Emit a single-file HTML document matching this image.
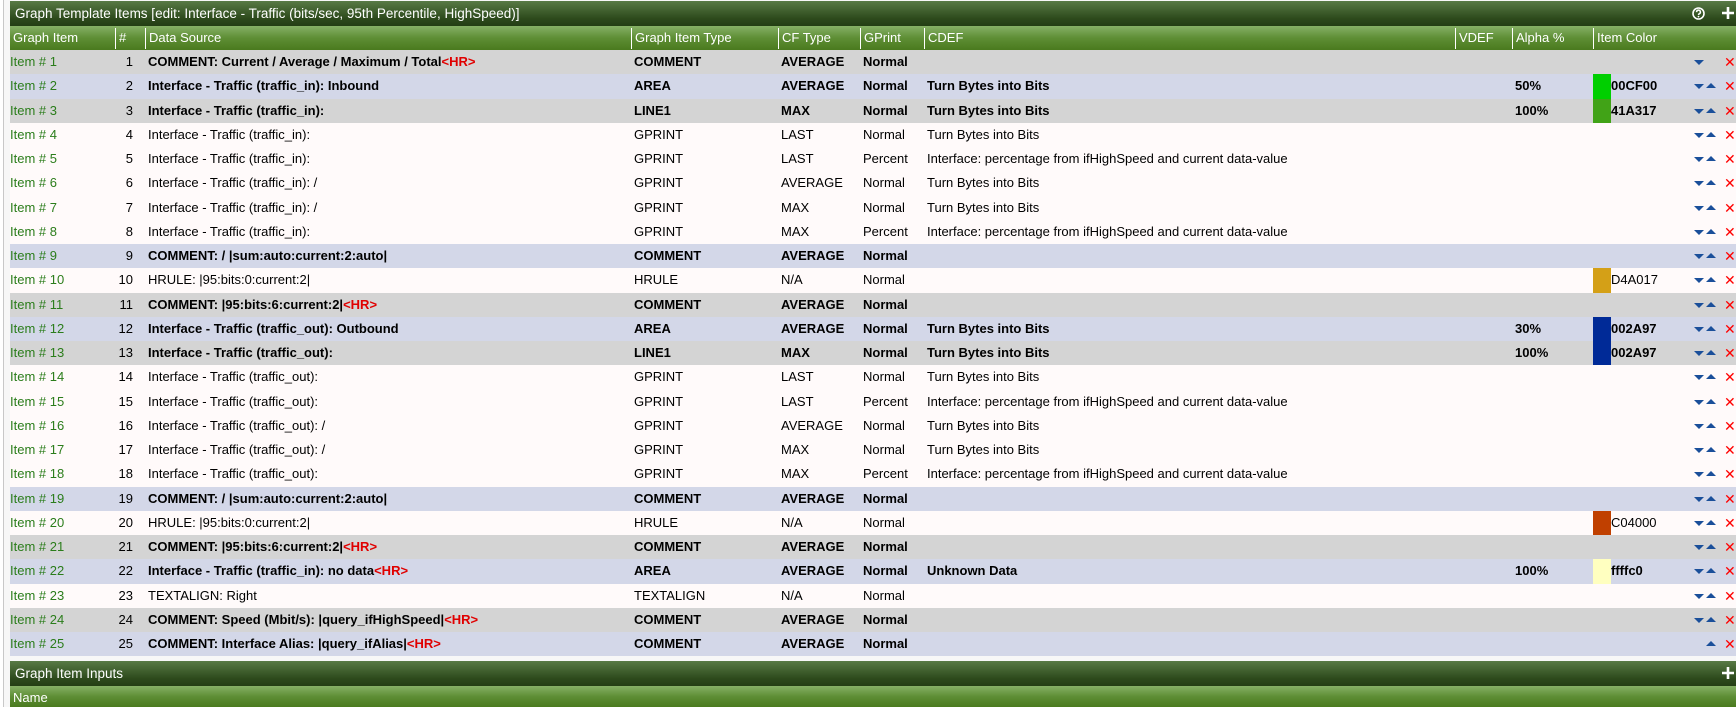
<!DOCTYPE html>
<html><head><meta charset="utf-8"><style>
*{margin:0;padding:0;box-sizing:border-box}
body{width:1736px;height:707px;overflow:hidden;background:#fff;font-family:"Liberation Sans","DejaVu Sans",sans-serif;font-size:13px;color:#000;position:relative}
.frame{position:absolute;left:3px;top:0;width:1733px;height:707px;border-left:1px solid #c8c8c8;background:#f7f7f7}
.title{position:absolute;left:10px;width:1726px;height:25px;background:linear-gradient(#587a45,#2d4a1c 70%,#233d14);color:#fff;font-size:13.5px;line-height:25px;padding-left:5px}
.hdr{position:absolute;left:10px;width:1726px;height:24px;background:linear-gradient(#86b066,#5e8e35 50%,#4a7a1e);color:#fff;line-height:24px}
.hdr span{position:absolute;top:2px;height:21px;line-height:20px;border-left:1px solid #fff;padding-left:3px}
.hdr span.f{border-left:none}
table{position:absolute;left:10px;top:50px;width:1726px;border-collapse:collapse;table-layout:fixed}
td{height:24.24px;padding:0 0 0 3px;white-space:nowrap;overflow:hidden;line-height:24px}
tr.g{background:#d4d4d4;font-weight:bold}
tr.b{background:#d3d7e8;font-weight:bold}
tr.w{background:#fffafa}
td.i{color:#2b7d1b;font-weight:normal;padding-left:0}
td.n{text-align:right;padding-right:12px;font-weight:normal}
.hr{color:#e00000;font-weight:bold}
.sw{display:inline-block;width:18px;height:24.3px;vertical-align:top}
td.c{padding-left:0}
td.a{position:relative}
.dn{position:absolute;left:101px;top:10px;width:0;height:0;border-left:5px solid transparent;border-right:5px solid transparent;border-top:5px solid #1a4f9a}
.up{position:absolute;left:113px;top:9px;width:0;height:0;border-left:5px solid transparent;border-right:5px solid transparent;border-bottom:5px solid #1a4f9a}
.x{position:absolute;left:131px;top:0;color:#f00;font-weight:bold;font-size:14px}
</style></head><body>
<div class="frame"></div>
<div class="title" style="top:1px">Graph Template Items [edit: Interface - Traffic (bits/sec, 95th Percentile, HighSpeed)]
<svg style="position:absolute;left:1682px;top:6px" width="13" height="13" viewBox="0 0 13 13"><circle cx="6.5" cy="6.5" r="5.5" fill="none" stroke="#fff" stroke-width="1.6"/><path d="M4.6 5.1a1.9 1.9 0 1 1 2.6 1.7c-.5.3-.7.6-.7 1.2" fill="none" stroke="#fff" stroke-width="1.5"/><circle cx="6.5" cy="9.6" r=".9" fill="#fff"/></svg>
<svg style="position:absolute;left:1712px;top:6px" width="12" height="12"><path d="M6 0v12M0 6h12" stroke="#fff" stroke-width="2.6"/></svg></div>
<div class="hdr" style="top:26px">
<span class="f" style="left:0">Graph Item</span><span style="left:105px">#</span><span style="left:135px">Data Source</span><span style="left:621px">Graph Item Type</span><span style="left:768px">CF Type</span><span style="left:850px">GPrint</span><span style="left:914px">CDEF</span><span style="left:1445px">VDEF</span><span style="left:1502px">Alpha %</span><span style="left:1583px">Item Color</span></div>
<table>
<colgroup><col style="width:105px"><col style="width:30px"><col style="width:486px"><col style="width:147px"><col style="width:82px"><col style="width:64px"><col style="width:531px"><col style="width:57px"><col style="width:81px"><col style="width:143px"></colgroup>
<tr class="g"><td class="i">Item # 1</td><td class="n">1</td><td>COMMENT: Current / Average / Maximum / Total<span class="hr">&lt;HR&gt;</span></td><td>COMMENT</td><td>AVERAGE</td><td>Normal</td><td></td><td></td><td></td><td class="c a"><i class="dn"></i><b class="x">✕</b></td></tr>
<tr class="b"><td class="i">Item # 2</td><td class="n">2</td><td>Interface - Traffic (traffic_in): Inbound</td><td>AREA</td><td>AVERAGE</td><td>Normal</td><td>Turn Bytes into Bits</td><td></td><td>50%</td><td class="c a"><span class="sw" style="background:#00CF00"></span>00CF00<i class="dn"></i><i class="up"></i><b class="x">✕</b></td></tr>
<tr class="g"><td class="i">Item # 3</td><td class="n">3</td><td>Interface - Traffic (traffic_in):</td><td>LINE1</td><td>MAX</td><td>Normal</td><td>Turn Bytes into Bits</td><td></td><td>100%</td><td class="c a"><span class="sw" style="background:#41A317"></span>41A317<i class="dn"></i><i class="up"></i><b class="x">✕</b></td></tr>
<tr class="w"><td class="i">Item # 4</td><td class="n">4</td><td>Interface - Traffic (traffic_in):</td><td>GPRINT</td><td>LAST</td><td>Normal</td><td>Turn Bytes into Bits</td><td></td><td></td><td class="c a"><i class="dn"></i><i class="up"></i><b class="x">✕</b></td></tr>
<tr class="w"><td class="i">Item # 5</td><td class="n">5</td><td>Interface - Traffic (traffic_in):</td><td>GPRINT</td><td>LAST</td><td>Percent</td><td>Interface: percentage from ifHighSpeed and current data-value</td><td></td><td></td><td class="c a"><i class="dn"></i><i class="up"></i><b class="x">✕</b></td></tr>
<tr class="w"><td class="i">Item # 6</td><td class="n">6</td><td>Interface - Traffic (traffic_in): /</td><td>GPRINT</td><td>AVERAGE</td><td>Normal</td><td>Turn Bytes into Bits</td><td></td><td></td><td class="c a"><i class="dn"></i><i class="up"></i><b class="x">✕</b></td></tr>
<tr class="w"><td class="i">Item # 7</td><td class="n">7</td><td>Interface - Traffic (traffic_in): /</td><td>GPRINT</td><td>MAX</td><td>Normal</td><td>Turn Bytes into Bits</td><td></td><td></td><td class="c a"><i class="dn"></i><i class="up"></i><b class="x">✕</b></td></tr>
<tr class="w"><td class="i">Item # 8</td><td class="n">8</td><td>Interface - Traffic (traffic_in):</td><td>GPRINT</td><td>MAX</td><td>Percent</td><td>Interface: percentage from ifHighSpeed and current data-value</td><td></td><td></td><td class="c a"><i class="dn"></i><i class="up"></i><b class="x">✕</b></td></tr>
<tr class="b"><td class="i">Item # 9</td><td class="n">9</td><td>COMMENT: / |sum:auto:current:2:auto|</td><td>COMMENT</td><td>AVERAGE</td><td>Normal</td><td></td><td></td><td></td><td class="c a"><i class="dn"></i><i class="up"></i><b class="x">✕</b></td></tr>
<tr class="w"><td class="i">Item # 10</td><td class="n">10</td><td>HRULE: |95:bits:0:current:2|</td><td>HRULE</td><td>N/A</td><td>Normal</td><td></td><td></td><td></td><td class="c a"><span class="sw" style="background:#D4A017"></span>D4A017<i class="dn"></i><i class="up"></i><b class="x">✕</b></td></tr>
<tr class="g"><td class="i">Item # 11</td><td class="n">11</td><td>COMMENT: |95:bits:6:current:2|<span class="hr">&lt;HR&gt;</span></td><td>COMMENT</td><td>AVERAGE</td><td>Normal</td><td></td><td></td><td></td><td class="c a"><i class="dn"></i><i class="up"></i><b class="x">✕</b></td></tr>
<tr class="b"><td class="i">Item # 12</td><td class="n">12</td><td>Interface - Traffic (traffic_out): Outbound</td><td>AREA</td><td>AVERAGE</td><td>Normal</td><td>Turn Bytes into Bits</td><td></td><td>30%</td><td class="c a"><span class="sw" style="background:#002A97"></span>002A97<i class="dn"></i><i class="up"></i><b class="x">✕</b></td></tr>
<tr class="g"><td class="i">Item # 13</td><td class="n">13</td><td>Interface - Traffic (traffic_out):</td><td>LINE1</td><td>MAX</td><td>Normal</td><td>Turn Bytes into Bits</td><td></td><td>100%</td><td class="c a"><span class="sw" style="background:#002A97"></span>002A97<i class="dn"></i><i class="up"></i><b class="x">✕</b></td></tr>
<tr class="w"><td class="i">Item # 14</td><td class="n">14</td><td>Interface - Traffic (traffic_out):</td><td>GPRINT</td><td>LAST</td><td>Normal</td><td>Turn Bytes into Bits</td><td></td><td></td><td class="c a"><i class="dn"></i><i class="up"></i><b class="x">✕</b></td></tr>
<tr class="w"><td class="i">Item # 15</td><td class="n">15</td><td>Interface - Traffic (traffic_out):</td><td>GPRINT</td><td>LAST</td><td>Percent</td><td>Interface: percentage from ifHighSpeed and current data-value</td><td></td><td></td><td class="c a"><i class="dn"></i><i class="up"></i><b class="x">✕</b></td></tr>
<tr class="w"><td class="i">Item # 16</td><td class="n">16</td><td>Interface - Traffic (traffic_out): /</td><td>GPRINT</td><td>AVERAGE</td><td>Normal</td><td>Turn Bytes into Bits</td><td></td><td></td><td class="c a"><i class="dn"></i><i class="up"></i><b class="x">✕</b></td></tr>
<tr class="w"><td class="i">Item # 17</td><td class="n">17</td><td>Interface - Traffic (traffic_out): /</td><td>GPRINT</td><td>MAX</td><td>Normal</td><td>Turn Bytes into Bits</td><td></td><td></td><td class="c a"><i class="dn"></i><i class="up"></i><b class="x">✕</b></td></tr>
<tr class="w"><td class="i">Item # 18</td><td class="n">18</td><td>Interface - Traffic (traffic_out):</td><td>GPRINT</td><td>MAX</td><td>Percent</td><td>Interface: percentage from ifHighSpeed and current data-value</td><td></td><td></td><td class="c a"><i class="dn"></i><i class="up"></i><b class="x">✕</b></td></tr>
<tr class="b"><td class="i">Item # 19</td><td class="n">19</td><td>COMMENT: / |sum:auto:current:2:auto|</td><td>COMMENT</td><td>AVERAGE</td><td>Normal</td><td></td><td></td><td></td><td class="c a"><i class="dn"></i><i class="up"></i><b class="x">✕</b></td></tr>
<tr class="w"><td class="i">Item # 20</td><td class="n">20</td><td>HRULE: |95:bits:0:current:2|</td><td>HRULE</td><td>N/A</td><td>Normal</td><td></td><td></td><td></td><td class="c a"><span class="sw" style="background:#C04000"></span>C04000<i class="dn"></i><i class="up"></i><b class="x">✕</b></td></tr>
<tr class="g"><td class="i">Item # 21</td><td class="n">21</td><td>COMMENT: |95:bits:6:current:2|<span class="hr">&lt;HR&gt;</span></td><td>COMMENT</td><td>AVERAGE</td><td>Normal</td><td></td><td></td><td></td><td class="c a"><i class="dn"></i><i class="up"></i><b class="x">✕</b></td></tr>
<tr class="b"><td class="i">Item # 22</td><td class="n">22</td><td>Interface - Traffic (traffic_in): no data<span class="hr">&lt;HR&gt;</span></td><td>AREA</td><td>AVERAGE</td><td>Normal</td><td>Unknown Data</td><td></td><td>100%</td><td class="c a"><span class="sw" style="background:#ffffc0"></span>ffffc0<i class="dn"></i><i class="up"></i><b class="x">✕</b></td></tr>
<tr class="w"><td class="i">Item # 23</td><td class="n">23</td><td>TEXTALIGN: Right</td><td>TEXTALIGN</td><td>N/A</td><td>Normal</td><td></td><td></td><td></td><td class="c a"><i class="dn"></i><i class="up"></i><b class="x">✕</b></td></tr>
<tr class="g"><td class="i">Item # 24</td><td class="n">24</td><td>COMMENT: Speed (Mbit/s): |query_ifHighSpeed|<span class="hr">&lt;HR&gt;</span></td><td>COMMENT</td><td>AVERAGE</td><td>Normal</td><td></td><td></td><td></td><td class="c a"><i class="dn"></i><i class="up"></i><b class="x">✕</b></td></tr>
<tr class="b"><td class="i">Item # 25</td><td class="n">25</td><td>COMMENT: Interface Alias: |query_ifAlias|<span class="hr">&lt;HR&gt;</span></td><td>COMMENT</td><td>AVERAGE</td><td>Normal</td><td></td><td></td><td></td><td class="c a"><i class="up"></i><b class="x">✕</b></td></tr>
</table>
<div class="title" style="top:661px">Graph Item Inputs
<svg style="position:absolute;left:1712px;top:6px" width="12" height="12"><path d="M6 0v12M0 6h12" stroke="#fff" stroke-width="2.6"/></svg></div>
<div class="hdr" style="top:686px;height:21px"><span class="f" style="left:0">Name</span></div>
</body></html>
